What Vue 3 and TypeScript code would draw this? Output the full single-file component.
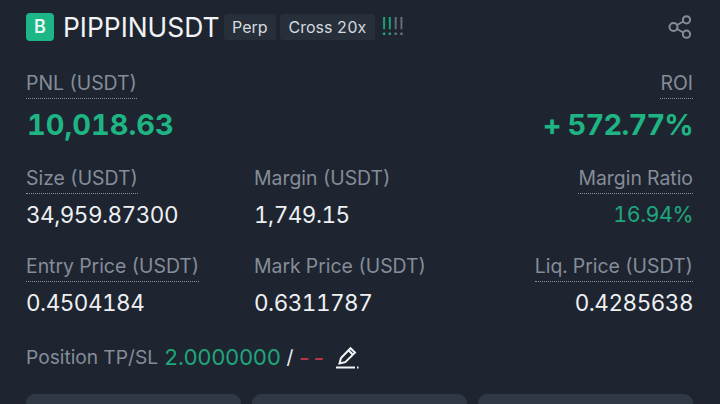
<script setup lang="ts">
interface Stat {
  label: string;
  value: string;
  dotted: boolean;
  align?: "right";
  green?: boolean;
}

const stats: Stat[] = [
  { label: "Size (USDT)", value: "34,959.87300", dotted: true },
  { label: "Margin (USDT)", value: "1,749.15", dotted: false },
  { label: "Margin Ratio", value: "16.94%", dotted: true, align: "right", green: true },
  { label: "Entry Price (USDT)", value: "0.4504184", dotted: true },
  { label: "Mark Price (USDT)", value: "0.6311787", dotted: false },
  { label: "Liq. Price (USDT)", value: "0.4285638", dotted: true, align: "right" },
];
</script>

<template>
  <div class="page">
    <header class="head">
      <span class="side">B</span>
      <span class="symbol">PIPPINUSDT</span>
      <span class="tag">Perp</span>
      <span class="tag">Cross 20x</span>
      <span class="risk"><i>!</i><i>!</i><i class="dim">!</i><i class="dim">!</i></span>
      <svg class="share" width="26" height="26" viewBox="0 0 26 26" fill="none" stroke="#868e9b" stroke-width="2">
        <circle cx="6.5" cy="13" r="4" />
        <circle cx="19.5" cy="5.8" r="3.6" />
        <circle cx="19.5" cy="20.2" r="3.6" />
        <path d="M10 11 16.3 7.5M10 15 16.3 18.5" />
      </svg>
    </header>

    <section class="pnl">
      <div class="cell">
        <span class="label dotted">PNL (USDT)</span>
        <span class="big">10,018.63</span>
      </div>
      <div class="cell right">
        <span class="label dotted">ROI</span>
        <span class="big roi">+ 572.77%</span>
      </div>
    </section>

    <section class="grid">
      <div v-for="s in stats" :key="s.label" class="cell" :class="{ right: s.align === 'right' }">
        <span class="label" :class="{ dotted: s.dotted }">{{ s.label }}</span>
        <span class="value" :class="{ green: s.green }">{{ s.value }}</span>
      </div>
    </section>

    <div class="tpsl">
      <span class="tp-label">Position TP/SL</span>
      <span class="tp">2.0000000</span>
      <span class="slash">/</span>
      <span class="sl">--</span>
      <svg class="edit" width="26" height="26" viewBox="0 0 26 26" fill="none" stroke="#f2f4f6" stroke-width="2">
        <path d="M6.5 19.5 8 14 17.5 4.2 22 8.6 12.3 18.2Z" />
        <path d="M15.5 6.3 19.9 10.7" />
        <path d="M3 23.5H22" />
        <path d="M24 23.5H25.5" />
      </svg>
    </div>

    <div class="buttons">
      <div class="btn"></div>
      <div class="btn"></div>
      <div class="btn"></div>
    </div>
  </div>
</template>

<style scoped>
.page {
  width: 720px;
  height: 404px;
  overflow: hidden;
  box-sizing: border-box;
  padding: 12px 27px 0 26px;
  background: #1e2530;
  font-family: Inter, Lato, sans-serif;
  font-variant-numeric: tabular-nums;
  color: #eef0f3;
}
.head {
  display: flex;
  align-items: center;
  height: 30px;
}
.side {
  width: 28px;
  height: 28px;
  border-radius: 4px;
  background: #1cb687;
  color: #e4f8f1;
  font-size: 18px;
  font-weight: 600;
  line-height: 28px;
  text-align: center;
}
.symbol {
  margin-left: 9px;
  font-size: 26.4px;
  color: #f1f3f5;
}
.tag {
  margin-left: 4px;
  padding: 0 8.5px;
  height: 26px;
  line-height: 26px;
  border-radius: 3px;
  background: #272f3b;
  font-size: 16px;
  color: #d5d9de;
}
.risk {
  margin-left: 6px;
  font-size: 24px;
  line-height: 26px;
  font-weight: 300;
  letter-spacing: -1px;
  color: #1cab7f;
}
.risk i {
  font-style: normal;
}
.risk .dim {
  color: #6a7480;
}
.share {
  margin-left: auto;
}
.pnl {
  display: flex;
  justify-content: space-between;
  margin-top: 29px;
}
.cell {
  display: flex;
  flex-direction: column;
  align-items: flex-start;
}
.cell.right {
  align-items: flex-end;
}
.label {
  font-size: 19.4px;
  line-height: 24px;
  padding-bottom: 3px;
  color: #858d99;
  border-bottom: 1px solid transparent;
}
.label.dotted {
  border-bottom: 1px dotted #8b93a0;
}
.big {
  margin-top: 9px;
  margin-left: 1px;
  font-size: 29px;
  line-height: 34px;
  font-weight: 700;
  color: #1fb483;
}
.big.roi {
  letter-spacing: -0.8px;
}
.grid {
  display: grid;
  grid-template-columns: 228px 1fr auto;
  row-gap: 25px;
  margin-top: 24px;
}
.value {
  margin-top: 6px;
  font-size: 22.5px;
  line-height: 29px;
  letter-spacing: -0.5px;
  color: #eef0f3;
}
.value.green {
  font-size: 21.5px;
  color: #1fa77c;
}
.tpsl {
  display: flex;
  align-items: center;
  margin-top: 27px;
  height: 26px;
  font-size: 19.2px;
}
.tp-label {
  color: #858d99;
}
.tp {
  margin-left: 6px;
  font-size: 22px;
  letter-spacing: -0.4px;
  color: #1fa77c;
}
.slash {
  margin-left: 6px;
  color: #eef0f3;
}
.sl {
  margin-left: 3px;
  font-size: 24px;
  letter-spacing: -1px;
  color: #b5364b;
}
.edit {
  margin-left: 7px;
}
.buttons {
  display: grid;
  grid-template-columns: repeat(3, 1fr);
  gap: 10.5px;
  margin-top: 24px;
}
.btn {
  height: 40px;
  border-radius: 9px;
  background: #2f3946;
}
</style>
